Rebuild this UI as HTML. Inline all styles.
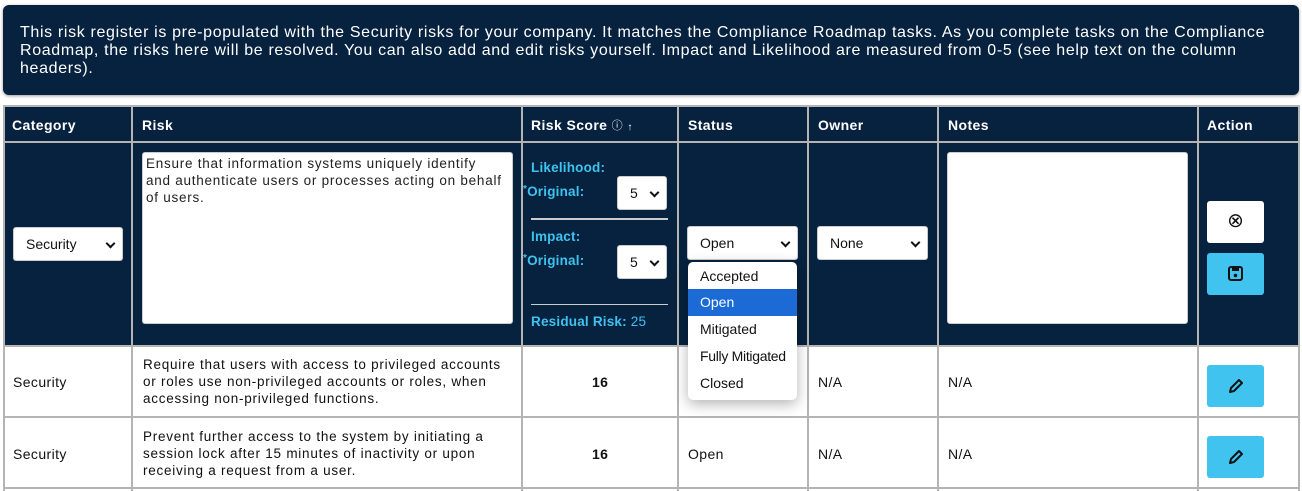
<!DOCTYPE html>
<html><head><style>
*{box-sizing:border-box;margin:0;padding:0}
body{width:1302px;height:491px;background:#fff;position:relative;overflow:hidden;font-family:"Liberation Sans",sans-serif;color:#111}
.a{position:absolute}
.navy{background:#06223f}
.banner{left:3px;top:5px;width:1296px;height:90px;border-radius:6px;color:#fff;font-size:16px;letter-spacing:0.65px;line-height:18px;padding:19px 0 0 17px;white-space:nowrap;box-shadow:0 1px 3px #999}
.vl{width:2px;background:#b4b4b4}
.hl{height:2px;background:#b4b4b4}
.th{color:#fff;font-weight:bold;font-size:14px;letter-spacing:0.4px;top:117px}
.sel{background:#fff;border:1px solid #ccc;border-radius:3px;font-size:14px;color:#111;padding-left:12px;line-height:32px;height:34px}
.chev{position:absolute;right:8px;top:12px;width:7px;height:7px;border-right:2px solid #111;border-bottom:2px solid #111;transform:rotate(45deg)}
.cy{color:#3ec3ef;font-weight:bold;font-size:13.5px;letter-spacing:0.2px}
.td{font-size:14px;color:#111;letter-spacing:0.4px}
.tx{font-size:13.5px;letter-spacing:0.75px;line-height:17px;white-space:nowrap}
.btn{background:#40c4ef;border-radius:3px;width:57px;height:42px}
</style></head><body>
<div class="a navy banner">This risk register is pre-populated with the Security risks for your company. It matches the Compliance Roadmap tasks. As you complete tasks on the Compliance<br>Roadmap, the risks here will be resolved. You can also add and edit risks yourself. Impact and Likelihood are measured from 0-5 (see help text on the column<br>headers).</div>

<div class="a navy" style="left:3px;top:106px;width:1296px;height:240px;border-radius:4px 4px 0 0"></div>
<div class="a hl" style="left:3px;top:105px;width:1296px"></div>
<div class="a hl" style="left:3px;top:141px;width:1296px"></div>
<div class="a hl" style="left:3px;top:345px;width:1296px"></div>
<div class="a hl" style="left:3px;top:416px;width:1296px"></div>
<div class="a hl" style="left:3px;top:487px;width:1296px"></div>
<div class="a vl" style="left:3px;top:105px;height:386px"></div>
<div class="a vl" style="left:131px;top:105px;height:386px"></div>
<div class="a vl" style="left:521px;top:105px;height:386px"></div>
<div class="a vl" style="left:677px;top:105px;height:386px"></div>
<div class="a vl" style="left:807px;top:105px;height:386px"></div>
<div class="a vl" style="left:937px;top:105px;height:386px"></div>
<div class="a vl" style="left:1197px;top:105px;height:386px"></div>
<div class="a vl" style="left:1298px;top:105px;height:386px"></div>

<div class="a th" style="left:12px">Category</div>
<div class="a th" style="left:142px">Risk</div>
<div class="a th" style="left:531px">Risk Score <span style="font-weight:normal;font-size:11px;vertical-align:top">ⓘ</span> <span style="font-size:10px">↑</span></div>
<div class="a th" style="left:688px">Status</div>
<div class="a th" style="left:818px">Owner</div>
<div class="a th" style="left:948px">Notes</div>
<div class="a th" style="left:1207px">Action</div>

<div class="a sel" style="left:13px;top:227px;width:110px">Security<span class="chev"></span></div>
<div class="a tx" style="left:142px;top:152px;width:371px;height:172px;background:#fff;border:1px solid #ccc;border-radius:3px;padding:2px 3px;color:#222">Ensure that information systems uniquely identify<br>and authenticate users or processes acting on behalf<br>of users.</div>
<div class="a cy" style="left:531px;top:160px">Likelihood:</div>
<div class="a cy" style="left:523px;top:184px"><span style="font-size:10px;vertical-align:top">*</span>Original:</div>
<div class="a sel" style="left:617px;top:176px;width:50px">5<span class="chev"></span></div>
<div class="a" style="left:531px;top:218px;width:137px;height:2px;background:#ccc"></div>
<div class="a cy" style="left:531px;top:229px">Impact:</div>
<div class="a cy" style="left:523px;top:253px"><span style="font-size:10px;vertical-align:top">*</span>Original:</div>
<div class="a sel" style="left:617px;top:245px;width:50px">5<span class="chev"></span></div>
<div class="a" style="left:531px;top:304px;width:137px;height:1px;background:#ccc"></div>
<div class="a cy" style="left:531px;top:314px">Residual Risk: <span style="font-weight:normal">25</span></div>

<div class="a sel" style="left:687px;top:226px;width:111px">Open<span class="chev"></span></div>
<div class="a sel" style="left:817px;top:226px;width:111px">None<span class="chev"></span></div>
<div class="a" style="left:947px;top:152px;width:241px;height:172px;background:#fff;border:1px solid #ccc;border-radius:3px"></div>

<div class="a" style="left:1207px;top:201px;width:57px;height:42px;background:#fff;border-radius:3px;text-align:center;line-height:40px;font-size:20px">⊗</div>
<div class="a btn" style="left:1207px;top:253px"><svg width="57" height="42" viewBox="0 0 57 42"><rect x="22" y="14" width="13" height="13" rx="2" fill="none" stroke="#111" stroke-width="2"/><rect x="25" y="14" width="7" height="4" fill="#111"/><circle cx="28.5" cy="22.5" r="1.8" fill="#111"/></svg></div>

<div class="a td" style="left:13px;top:374px">Security</div>
<div class="a tx" style="left:143px;top:356px">Require that users with access to privileged accounts<br>or roles use non-privileged accounts or roles, when<br>accessing non-privileged functions.</div>
<div class="a td" style="left:592px;top:374px;font-weight:bold">16</div>
<div class="a td" style="left:818px;top:374px">N/A</div>
<div class="a td" style="left:948px;top:374px">N/A</div>
<div class="a btn" style="left:1207px;top:365px"><svg width="57" height="42" viewBox="0 0 57 42"><path d="M23 27 L24 23 L32 15 L35 18 L27 26 Z" fill="none" stroke="#111" stroke-width="2" stroke-linejoin="round"/></svg></div>

<div class="a td" style="left:13px;top:446px">Security</div>
<div class="a tx" style="left:143px;top:428px">Prevent further access to the system by initiating a<br>session lock after 15 minutes of inactivity or upon<br>receiving a request from a user.</div>
<div class="a td" style="left:592px;top:446px;font-weight:bold">16</div>
<div class="a td" style="left:688px;top:446px">Open</div>
<div class="a td" style="left:818px;top:446px">N/A</div>
<div class="a td" style="left:948px;top:446px">N/A</div>
<div class="a btn" style="left:1207px;top:436px"><svg width="57" height="42" viewBox="0 0 57 42"><path d="M23 27 L24 23 L32 15 L35 18 L27 26 Z" fill="none" stroke="#111" stroke-width="2" stroke-linejoin="round"/></svg></div>

<div class="a" style="left:688px;top:262px;width:109px;height:138px;background:#fff;border-radius:5px;box-shadow:0 4px 14px rgba(0,0,0,.3);font-size:14px;padding-top:4px">
<div style="height:27px;line-height:20px;padding-left:12px">Accepted</div>
<div style="height:27px;line-height:27px;padding-left:12px;background:#1c6ad6;color:#fff;margin-top:-4px">Open</div>
<div style="height:27px;line-height:27px;padding-left:12px">Mitigated</div>
<div style="height:27px;line-height:27px;padding-left:12px;letter-spacing:-0.3px">Fully Mitigated</div>
<div style="height:27px;line-height:27px;padding-left:12px">Closed</div>
</div>
</body></html>
